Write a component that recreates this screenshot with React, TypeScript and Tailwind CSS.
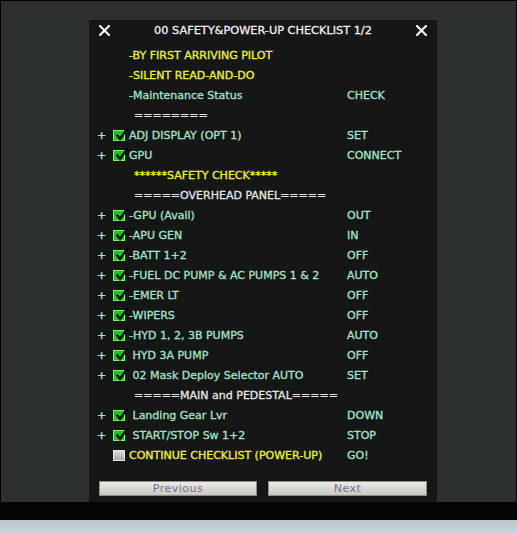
import React from "react";

type Row =
  | { kind: "note"; text: string; color: "yellow" | "mint" | "white"; indent?: boolean; value?: string }
  | { kind: "item"; text: string; value: string }
  | { kind: "open"; text: string; value: string };

const ROWS: Row[] = [
  { kind: "note", text: "-BY FIRST ARRIVING PILOT", color: "yellow" },
  { kind: "note", text: "-SILENT READ-AND-DO", color: "yellow" },
  { kind: "note", text: "-Maintenance Status", color: "mint", value: "CHECK" },
  { kind: "note", text: "========", color: "white", indent: true },
  { kind: "item", text: "ADJ DISPLAY (OPT 1)", value: "SET" },
  { kind: "item", text: "GPU", value: "CONNECT" },
  { kind: "note", text: "******SAFETY CHECK*****", color: "yellow", indent: true },
  { kind: "note", text: "=====OVERHEAD PANEL=====", color: "white", indent: true },
  { kind: "item", text: "-GPU (Avail)", value: "OUT" },
  { kind: "item", text: "-APU GEN", value: "IN" },
  { kind: "item", text: "-BATT 1+2", value: "OFF" },
  { kind: "item", text: "-FUEL DC PUMP & AC PUMPS 1 & 2", value: "AUTO" },
  { kind: "item", text: "-EMER LT", value: "OFF" },
  { kind: "item", text: "-WIPERS", value: "OFF" },
  { kind: "item", text: "-HYD 1, 2, 3B PUMPS", value: "AUTO" },
  { kind: "item", text: " HYD 3A PUMP", value: "OFF" },
  { kind: "item", text: " 02 Mask Deploy Selector AUTO", value: "SET" },
  { kind: "note", text: "=====MAIN and PEDESTAL=====", color: "white", indent: true },
  { kind: "item", text: " Landing Gear Lvr", value: "DOWN" },
  { kind: "item", text: " START/STOP Sw 1+2", value: "STOP" },
  { kind: "open", text: "CONTINUE CHECKLIST (POWER-UP)", value: "GO!" },
];

const colorClass = {
  yellow: "text-[#f2f226]",
  mint: "text-[#a8e2c6]",
  white: "text-[#e4e6e4]",
};

function CloseIcon() {
  return (
    <svg width="11" height="11" viewBox="0 0 11 11" className="block">
      <path d="M1 1 L10 10 M10 1 L1 10" stroke="#f2f2f2" strokeWidth="2.2" strokeLinecap="square" />
    </svg>
  );
}

function CheckedBox() {
  return (
    <div className="relative h-[11px] w-[12px] border border-[#7dfc6a] bg-[#16c916]">
      <svg width="14" height="14" viewBox="0 0 14 14" className="absolute left-[1px] top-[-4px]">
        <path d="M1.5 7.5 L5 12 L12.5 1" stroke="#000" strokeWidth="2.3" fill="none" />
      </svg>
    </div>
  );
}

function EmptyBox() {
  return (
    <div className="h-[11px] w-[12px] border border-[#e8e8e8] bg-gradient-to-b from-[#d8d8d8] to-[#a8a8a8]" />
  );
}

function ChecklistRow({ row }: { row: Row }) {
  if (row.kind === "note") {
    return (
      <div className="flex h-[20px] items-center">
        <span className={`${row.indent ? "ml-[45px]" : "ml-[40px]"} w-[218px] whitespace-pre ${colorClass[row.color]}`}>
          {row.text}
        </span>
        {row.value ? <span className="text-[#a8e2c6]">{row.value}</span> : null}
      </div>
    );
  }
  const open = row.kind === "open";
  return (
    <div className="flex h-[20px] items-center">
      <span className="w-[24px] pl-[8px] text-[#a8e6d8]">{open ? "" : "+"}</span>
      <div className="w-[16px]">{open ? <EmptyBox /> : <CheckedBox />}</div>
      <span className={`w-[218px] whitespace-pre ${open ? "text-[#f2f226]" : "text-[#a8e2c6]"}`}>{row.text}</span>
      <span className="text-[#a8e2c6]">{row.value}</span>
    </div>
  );
}

export default function App() {
  return (
    <div className="flex h-[534px] w-[517px] flex-col overflow-hidden bg-[#2c302f] font-['DejaVu_Sans',sans-serif] text-[11px] leading-none [-webkit-text-stroke:0.3px_currentColor]">
      <div className="flex h-[502px] border-l border-t border-r border-black pt-[19px]">
        <div className="ml-[88px] flex h-[482px] w-[348px] flex-col bg-[#151717]">
          <div className="flex h-[20px] items-center justify-between px-[10px] pt-[1px]">
            <CloseIcon />
            <span className="text-[11.3px] text-[#eeeeee]">00 SAFETY&amp;POWER-UP CHECKLIST 1/2</span>
            <CloseIcon />
          </div>
          <div className="pt-[5px]">
            {ROWS.map((row, i) => (
              <ChecklistRow key={i} row={row} />
            ))}
          </div>
          <div className="mt-[16px] flex gap-[11px] px-[10px] [-webkit-text-stroke:0]">
            <button
              type="button"
              className="h-[15px] w-[158px] border border-[#8c8c88] bg-gradient-to-b from-[#ecebe6] to-[#c9c7c1] text-[11px] tracking-[0.5px] text-[#6f768a]"
            >
              Previous
            </button>
            <button
              type="button"
              className="h-[15px] w-[159px] border border-[#8c8c88] bg-gradient-to-b from-[#ecebe6] to-[#c9c7c1] text-[11px] tracking-[0.5px] text-[#6f768a]"
            >
              Next
            </button>
          </div>
        </div>
      </div>
      <div className="h-[18px] bg-[#050505]" />
      <div className="flex-1 bg-gradient-to-b from-[#b9c6cc] to-[#cdd6da]" />
    </div>
  );
}
